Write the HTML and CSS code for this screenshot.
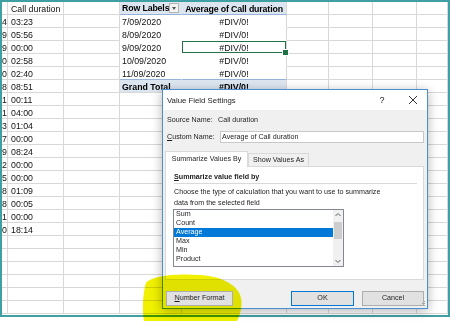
FILE: index.html
```html
<!DOCTYPE html>
<html lang="en">
<head>
    <meta charset="UTF-8">
    <meta name="viewport" content="width=device-width, initial-scale=1.0">
    <title>Value Field Settings</title>
    <link rel="stylesheet" href="styles.css">
</head>
<body>
    <div class="page">
        <div class="frame">
            <div class="sheet" id="sheet"></div>
        </div>

        <div class="dialog">
            <div class="titlebar">
                <span class="title">Value Field Settings</span>
                <span class="help">?</span>
                <svg class="close" viewBox="0 0 12 12"><path d="M2 2L10 10M10 2L2 10" stroke="#333" stroke-width="1"/></svg>
            </div>
            <div class="dlg-body">
                <div class="field"><span class="label">Source Name:</span><span class="value">Call duration</span></div>
                <div class="field"><span class="label"><u>C</u>ustom Name:</span><span class="textbox">Average of Call duration</span></div>
                <div class="tabs">
                    <span class="tab active">Summarize Values By</span>
                    <span class="tab">Show Values As</span>
                </div>
                <div class="panel">
                    <div class="heading"><u>S</u>ummarize value field by</div>
                    <p class="hint">Choose the type of calculation that you want to use to summarize<br>data from the selected field</p>
                    <div class="listbox">
                        <ul class="items">
                            <li>Sum</li>
                            <li>Count</li>
                            <li class="selected">Average</li>
                            <li>Max</li>
                            <li>Min</li>
                            <li>Product</li>
                        </ul>
                        <div class="scrollbar">
                            <svg class="arrow" viewBox="0 0 10 10"><path d="M2.5 6L5 3.5L7.5 6" fill="none" stroke="#606060"/></svg>
                            <span class="thumb"></span>
                            <svg class="arrow down" viewBox="0 0 10 10"><path d="M2.5 4L5 6.5L7.5 4" fill="none" stroke="#606060"/></svg>
                        </div>
                    </div>
                </div>
                <div class="buttons">
                    <button class="btn wide"><u>N</u>umber Format</button>
                    <button class="btn default">OK</button>
                    <button class="btn cancel">Cancel</button>
                </div>
            </div>
            <svg class="grip" viewBox="0 0 6 6"><path d="M4 4h1v1H4zM2 4h1v1H2zM4 2h1v1H4zM0 4h1v1H0zM2 2h1v1H2zM4 0h1v1H4z" fill="#a0a0a0"/></svg>
        </div>

        <svg class="marker" viewBox="0 0 450 321">
            <path d="M146 283C150 276 176 273 201 275C223 277 238 285 241 298C243 308 239 317 237 321L144 321C142 310 143 292 146 283Z" fill="#f0f000"/>
        </svg>
    </div>
    <script>
        const colA = ['', '4', '9', '9', '0', '0', '8', '1', '1', '3', '7', '9', '2', '5', '8', '8', '1', '0'];
        const colB = ['Call duration', '03:23', '05:56', '00:00', '02:58', '02:40', '08:51', '00:11', '04:00',
                      '01:04', '00:00', '08:24', '00:00', '00:00', '01:09', '00:05', '00:00', '18:14'];
        const pivot = [
            ['Row Labels', 'Average of Call duration'],
            ['7/09/2020', '#DIV/0!'],
            ['8/09/2020', '#DIV/0!'],
            ['9/09/2020', '#DIV/0!'],
            ['10/09/2020', '#DIV/0!'],
            ['11/09/2020', '#DIV/0!'],
            ['Grand Total', '#DIV/0!']
        ];

        const sheet = document.getElementById('sheet');
        for (let r = 0; r < 24; r++) {
            for (let c = 0; c < 9; c++) {
                const cell = document.createElement('div');
                cell.className = 'cell';
                if (c === 0) { cell.classList.add('num'); cell.textContent = colA[r] || ''; }
                if (c === 1) { cell.classList.add('txt'); cell.textContent = colB[r] || ''; }
                if ((c === 3 || c === 4) && r < pivot.length) {
                    const kind = r === 0 ? 'pv-head' : (r === pivot.length - 1 ? 'pv-total' : 'pv-body');
                    cell.classList.add(kind, c === 3 ? 'pv-label' : 'pv-value');
                    if (r === pivot.length - 2) cell.classList.add('pv-last');
                    cell.textContent = pivot[r][c - 3];
                    if (r === 0 && c === 3) {
                        const drop = document.createElement('span');
                        drop.className = 'drop';
                        cell.appendChild(drop);
                    }
                    if (r === 3 && c === 4) cell.classList.add('sel');
                }
                sheet.appendChild(cell);
            }
        }
    </script>
</body>
</html>
```

FILE: styles.css
```css
*{margin:0; padding:0; box-sizing:border-box;}
li{list-style:none;}

body{
    font-family:"Liberation Sans", Arial, sans-serif;
    color:#111;
    background:#fff;
}
.page{
    position:relative;
    width:450px;
    height:321px;
    overflow:hidden;
}
.frame{
    width:450px;
    height:317px;
    border:2px solid #3f9fa3;
    overflow:hidden;
}

/* sheet */
.sheet{
    display:grid;
    grid-template-columns:6px 56px 56px 62px 105px 42px 44px 44px 31px;
    grid-auto-rows:13px;
    font-size:8.8px;
}
.sheet .cell{
    border-right:1px solid #d8d8d8;
    border-bottom:1px solid #d8d8d8;
    padding:1px 2px 0;
    line-height:13px;
    white-space:nowrap;
    overflow:hidden;
}
.sheet .num{text-align:right; padding:1px 1px 0 0;}
.sheet .txt{padding-left:3px;}

.sheet .pv-head{background:#dce6f1; border-bottom-color:#95b3d7; font-weight:bold; color:#000; letter-spacing:-0.15px;}
.sheet .pv-head.pv-label{border-right-color:#dce6f1; display:flex; justify-content:space-between; align-items:center; padding-top:0;}
.sheet .pv-body{border-bottom-color:#fff;}
.sheet .pv-body.pv-label{border-right-color:#fff;}
.sheet .pv-last{border-bottom-color:#95b3d7;}
.sheet .pv-total{background:#dce6f1; font-weight:bold; color:#000;}
.sheet .pv-total.pv-label{border-right-color:#dce6f1;}
.sheet .pv-value{text-align:center;}
.sheet .drop{
    width:11px;
    height:10px;
    border:1px solid #b4b4b4;
    background:#f3f3f3;
    position:relative;
}
.sheet .drop::after{
    content:"";
    position:absolute;
    left:2px;
    top:3px;
    border-left:2.5px solid transparent;
    border-right:2.5px solid transparent;
    border-top:3px solid #555;
}
.sheet .sel{
    overflow:visible;
    position:relative;
    box-shadow:inset 0 0 0 1px #217346;
}
.sheet .sel::after{
    content:"";
    position:absolute;
    right:-3px;
    bottom:-3px;
    width:5px;
    height:5px;
    background:#217346;
    border:1px solid #fff;
}

/* dialog */
.dialog{
    position:absolute;
    left:162px;
    top:89px;
    width:266px;
    height:220px;
    border:1px solid #4a8fd4;
    background:#f0f0f0;
    box-shadow:0 2px 10px rgba(0,0,0,0.3);
    display:flex;
    flex-direction:column;
    font-size:7.15px;
    color:#1e1e1e;
}
.titlebar{
    height:20px;
    background:#fff;
    display:flex;
    align-items:center;
    padding:0 8px 0 4px;
}
.titlebar .title{flex:1; font-size:7.8px;}
.titlebar .help{width:12px; text-align:center; margin-right:19px; font-size:9px;}
.titlebar .close{width:12px; height:12px;}

.dlg-body{flex:1; padding:4px 3px 0 3px;}
.field{display:flex; height:12px; line-height:12px; padding-left:1px;}
.field + .field{margin-top:5px;}
.field .label{width:51px;}
.field .textbox{
    flex:1;
    margin-left:2px;
    background:#fff;
    border:1px solid #c8c8c8;
    padding-left:1px;
    line-height:10px;
}

.tabs{display:flex; align-items:flex-end; height:15px; margin:8px 0 0 -1px;}
.tab{
    width:61px;
    height:13px;
    line-height:12px;
    text-align:center;
    border:1px solid #d9d9d9;
    border-bottom:none;
    background:#f0f0f0;
}
.tab.active{
    width:83px;
    height:16px;
    line-height:14px;
    margin-bottom:-1px;
    background:#fff;
    position:relative;
    z-index:1;
}

.panel{
    width:259px;
    height:114px;
    margin-left:-1px;
    border:1px solid #d9d9d9;
    background:#fff;
    padding:4px 6px 0 8px;
}
.panel .heading{font-weight:bold; line-height:12px; border-bottom:1px solid #d9d9d9;}
.panel .hint{margin-top:3px; line-height:11px;}

.listbox{
    display:flex;
    width:171px;
    height:58px;
    margin-left:-1px;
    border:1px solid #828790;
}
.listbox .items{flex:1;}
.listbox .items li{height:9px; line-height:9px; padding-left:2px;}
.listbox .items li.selected{background:#0078d7; color:#fff;}
.scrollbar{
    width:10px;
    background:#f0f0f0;
    display:flex;
    flex-direction:column;
    align-items:center;
}
.scrollbar .arrow{width:10px; height:10px;}
.scrollbar .arrow.down{margin-top:auto;}
.scrollbar .thumb{width:8px; height:17px; margin-top:2px; background:#cdcdcd;}

.buttons{display:flex; gap:8px; margin-top:11px;}
.btn{
    height:15px;
    border:1px solid #adadad;
    background:#e1e1e1;
    font:inherit;
    color:inherit;
    line-height:13px;
    text-align:center;
}
.btn.wide{width:67px; margin-right:auto; position:relative; z-index:2;}
.btn.default{width:63px; border-color:#0078d7;}
.btn.cancel{width:62px;}

.grip{position:absolute; right:1px; bottom:1px; width:6px; height:6px;}

/* highlighter stroke */
.marker{
    position:absolute;
    left:0;
    top:0;
    width:450px;
    height:321px;
    z-index:1;
    mix-blend-mode:multiply;
    pointer-events:none;
}
```
